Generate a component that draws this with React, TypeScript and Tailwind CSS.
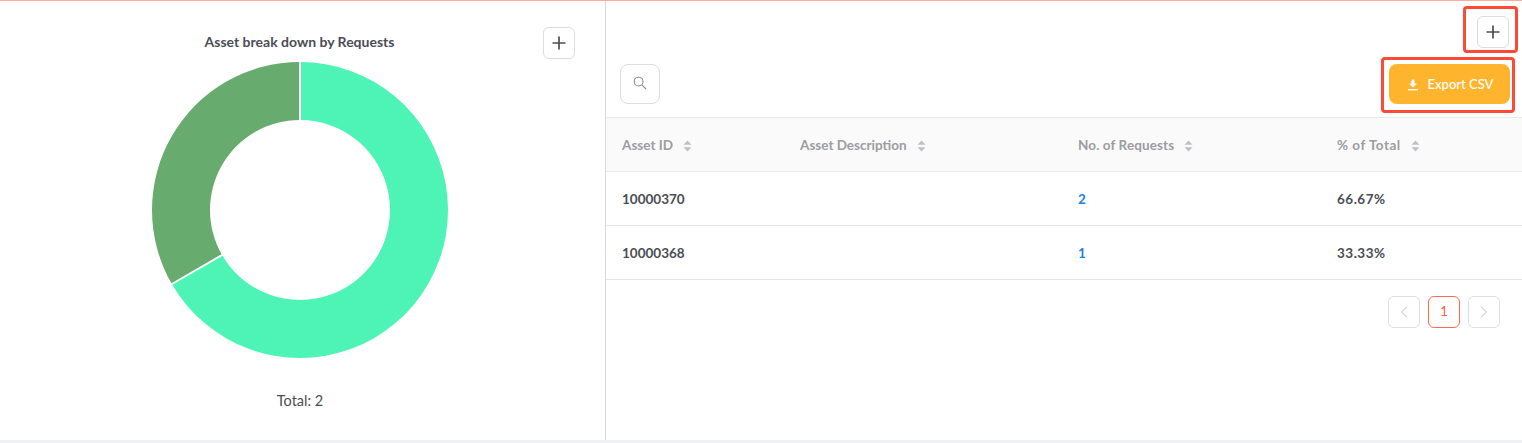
import { ChevronLeft, ChevronRight } from 'lucide-react';

const rows = [
  { id: '10000370', requests: '2', percent: '66.67%' },
  { id: '10000368', requests: '1', percent: '33.33%' },
];

const columns = [
  { label: 'Asset ID', width: 'w-[178px]' },
  { label: 'Asset Description', width: 'w-[278px]' },
  { label: 'No. of Requests', width: 'w-[259px] tracking-[0.1px]' },
  { label: '% of Total', width: 'tracking-[0.5px]' },
];

function SortIcon() {
  return (
    <svg width="9" height="12" viewBox="0 0 9 12" className="ml-[10px] text-[#bfc1c5]">
      <path d="M4.5 0.5 L8.5 4.8 H0.5 Z" fill="currentColor" />
      <path d="M4.5 11.5 L8.5 7.2 H0.5 Z" fill="currentColor" />
    </svg>
  );
}

function PlusIcon() {
  return (
    <svg width="14" height="14" viewBox="0 0 14 14" stroke="currentColor" strokeWidth="1.7">
      <path d="M7 0.5 V13.5 M0.5 7 H13.5" />
    </svg>
  );
}

function SearchIcon() {
  return (
    <svg width="14" height="14" viewBox="0 0 14 14" fill="none" stroke="#8d8f94" strokeWidth="1.1" className="-translate-y-[1px]">
      <circle cx="5.6" cy="5.6" r="4.4" />
      <path d="M8.8 8.8 L13 13" />
    </svg>
  );
}

function ExportIcon() {
  return (
    <svg width="12" height="12" viewBox="0 0 12 12" fill="currentColor">
      <path d="M4.5 0.5 H7.5 V4.5 H10 L6 8.6 L2 4.5 H4.5 Z" />
      <rect x="1" y="10" width="10" height="1.4" />
    </svg>
  );
}

function Donut() {
  return (
    <svg width="298" height="298" viewBox="-149 -149 298 298">
      <path d="M0 -148 A148 148 0 1 1 -128.17 74 L-77.94 45 A90 90 0 1 0 0 -90 Z" fill="#4df4b6" />
      <path d="M-128.17 74 A148 148 0 0 1 0 -148 L0 -90 A90 90 0 0 0 -77.94 45 Z" fill="#67ab6f" />
      <path d="M0 -149 V-89 M-129 74.5 L-77 44.5" stroke="#ffffff" strokeWidth="2" fill="none" />
    </svg>
  );
}

export default function App() {
  return (
    <div className="relative h-[443px] w-[1522px] overflow-hidden bg-[#eff1f5] font-['Lato','Noto_Sans',sans-serif] text-[#4a4d55]">
      <div className="flex h-[440px] border-t border-[#ffa99a] bg-white">
        <div className="relative flex w-[606px] shrink-0 flex-col items-center border-r border-[#d9d9d9] pt-[32px]">
          <div className="w-full pr-[6px] text-center text-[14px] font-bold leading-[17px]">Asset break down by Requests</div>
          <div className="mt-[11px] mr-[6px]">
            <Donut />
          </div>
          <div className="mt-[33px] mr-[5px] text-[14.5px] leading-[18px]">Total: 2</div>
          <button className="absolute left-[543px] top-[26px] flex h-8 w-8 items-center justify-center rounded-md border border-[#dcdcdc] bg-white">
            <PlusIcon />
          </button>
        </div>

        <div className="flex min-w-0 flex-1 flex-col">
          <div className="flex justify-end pt-[15px] pr-[13px]">
            <button className="flex h-8 w-8 items-center justify-center rounded-md border border-[#dcdcdc] bg-white">
              <PlusIcon />
            </button>
          </div>
          <div className="mt-4 flex items-start justify-between pl-[14px] pr-[12px]">
            <button className="flex h-10 w-10 items-center justify-center rounded-lg border border-[#dcdcdc] bg-white">
              <SearchIcon />
            </button>
            <button className="flex h-10 w-[121px] items-center justify-center gap-[9px] rounded-lg bg-[#ffb42e] pt-[1px] pl-[1px] text-[13px] font-medium text-white">
              <ExportIcon />
              Export CSV
            </button>
          </div>
          <table className="mt-[13px] w-full table-fixed border-collapse text-[13.5px]">
            <thead>
              <tr className="h-[54px] border-y border-[#ebebeb] bg-[#fafafa] text-left text-[#9b9da2]">
                {columns.map((col) => (
                  <th key={col.label} className={`${col.width} pl-4 pt-[2px] font-bold`}>
                    <span className="flex items-center">
                      {col.label}
                      <SortIcon />
                    </span>
                  </th>
                ))}
              </tr>
            </thead>
            <tbody>
              {rows.map((row) => (
                <tr key={row.id} className="h-[54px] border-b border-[#e6e6e6] font-bold">
                  <td className="pl-4 pt-[2px]">{row.id}</td>
                  <td className="pl-4"></td>
                  <td className="pl-4 pt-[2px] text-[#1f7fe0]">{row.requests}</td>
                  <td className="pl-4 pt-[2px] tracking-[0.5px]">{row.percent}</td>
                </tr>
              ))}
            </tbody>
          </table>
          <div className="mt-4 flex justify-end gap-2 pr-[22px]">
            <button className="flex h-8 w-8 items-center justify-center rounded-md border border-[#dedede] text-[#b5b5b5]">
              <ChevronLeft size={20} strokeWidth={1.1} />
            </button>
            <button className="flex h-8 w-8 items-center justify-center rounded-md border border-[#ff6a4d] text-[13px] text-[#ff5a3c]">1</button>
            <button className="flex h-8 w-8 items-center justify-center rounded-md border border-[#dedede] text-[#b5b5b5]">
              <ChevronRight size={20} strokeWidth={1.1} />
            </button>
          </div>
        </div>
      </div>

      {/* annotation boxes on top of the screenshot */}
      <div className="absolute left-[1463px] top-[6px] h-[47px] w-[55px] rounded-[4px] border-[3px] border-[#fb4a35]" />
      <div className="absolute left-[1381px] top-[57px] h-[56px] w-[134px] rounded-[4px] border-[3px] border-[#fb4a35]" />
    </div>
  );
}
